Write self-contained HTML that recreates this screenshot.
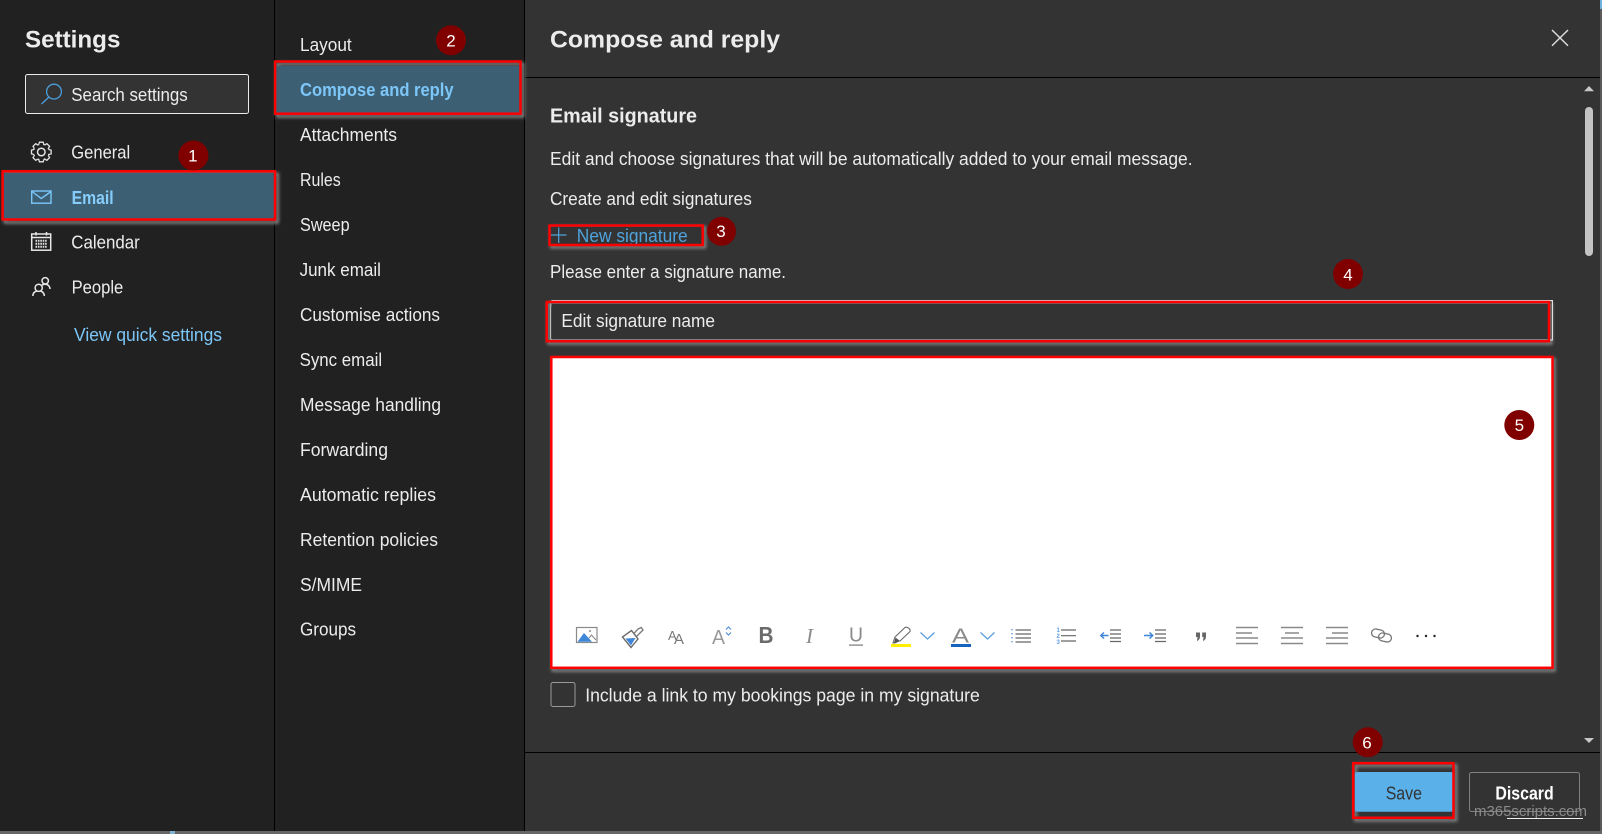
<!DOCTYPE html>
<html lang="en">
<head>
<meta charset="utf-8">
<title>Settings - Compose and reply</title>
<style>
html,body{margin:0;padding:0;background:#333;width:1602px;height:834px;overflow:hidden}
svg{display:block}
text{font-family:"Liberation Sans",sans-serif;font-size:18px;fill:#ececec}
.b{font-weight:bold}
.n{font-size:17px;fill:#fff;text-anchor:middle}
.red{fill:none;stroke:#f00;stroke-width:2.5}
.sh{fill:none;stroke:#888;stroke-width:3;filter:url(#s)}
.bl{fill:none;stroke:#3f86d8;stroke-width:1.3}
.g{stroke:#8a8a8a;stroke-width:1.6}
.d{stroke:#666;stroke-width:1.2}
</style>
</head>
<body>
<svg width="1602" height="834" viewBox="0 0 1602 834" xmlns="http://www.w3.org/2000/svg">
<defs><filter id="s" x="-10%" y="-30%" width="120%" height="160%"><feGaussianBlur stdDeviation="1.6"/></filter></defs>

<!-- panels -->
<rect width="1602" height="834" fill="#333"/>
<rect x="0" y="0" width="274" height="834" fill="#212121"/>
<rect x="275" y="0" width="249" height="834" fill="#212121"/>
<rect x="274" y="0" width="1" height="834" fill="#000"/>
<rect x="524" y="0" width="1" height="834" fill="#000"/>
<rect x="525" y="77" width="1075" height="1" fill="#000"/>
<rect x="525" y="752" width="1075" height="1" fill="#000"/>
<rect x="1600" y="0" width="2" height="834" fill="#5a5a5a"/>
<rect x="1600" y="0" width="2" height="9" fill="#6fb0dc"/>
<rect x="0" y="831" width="1602" height="3" fill="#666"/>
<rect x="170" y="831" width="5" height="3" fill="#7fb2d0"/>

<!-- left nav -->
<text class="b" x="25" y="47.6" style="font-size:24px" textLength="95.4" lengthAdjust="spacingAndGlyphs">Settings</text>
<rect x="25.5" y="74.5" width="223" height="39" rx="2" fill="#333" stroke="#ececec" stroke-width="1"/>
<g fill="none" stroke="#4a9fdc" stroke-width="1.3"><circle cx="54" cy="91.6" r="7.4"/><path d="M49 97 41.5 104"/></g>
<text x="71.3" y="101" textLength="116.4" lengthAdjust="spacingAndGlyphs">Search settings</text>

<g fill="none" stroke="#e4e4e4" stroke-width="1.3" transform="translate(41.3 152)">
<path d="M-2.54-7.37L-1.91-9.82H1.91L2.54-7.37A7.8 7.8 0 0 1 3.42-7.01"/>
<path transform="rotate(45)" d="M-2.54-7.37L-1.91-9.82H1.91L2.54-7.37A7.8 7.8 0 0 1 3.42-7.01"/>
<path transform="rotate(90)" d="M-2.54-7.37L-1.91-9.82H1.91L2.54-7.37A7.8 7.8 0 0 1 3.42-7.01"/>
<path transform="rotate(135)" d="M-2.54-7.37L-1.91-9.82H1.91L2.54-7.37A7.8 7.8 0 0 1 3.42-7.01"/>
<path transform="rotate(180)" d="M-2.54-7.37L-1.91-9.82H1.91L2.54-7.37A7.8 7.8 0 0 1 3.42-7.01"/>
<path transform="rotate(225)" d="M-2.54-7.37L-1.91-9.82H1.91L2.54-7.37A7.8 7.8 0 0 1 3.42-7.01"/>
<path transform="rotate(270)" d="M-2.54-7.37L-1.91-9.82H1.91L2.54-7.37A7.8 7.8 0 0 1 3.42-7.01"/>
<path transform="rotate(315)" d="M-2.54-7.37L-1.91-9.82H1.91L2.54-7.37A7.8 7.8 0 0 1 3.42-7.01"/>
<circle r="3.8" stroke-width="1.5"/>
</g>
<text x="71.3" y="158.6" textLength="58.9" lengthAdjust="spacingAndGlyphs">General</text>

<!-- email row -->
<rect x="2.6" y="171.3" width="272.4" height="48.2" fill="#3d5f73"/>
<rect class="sh" x="5" y="174" width="272.4" height="48.2"/>
<rect x="3" y="173" width="271" height="46" fill="#3d5f73"/>
<g fill="none" stroke="#7cc6f8" stroke-width="1.4"><rect x="31.7" y="191" width="19.3" height="12.2"/><path d="M32 191.5 41.3 198.5 51 191.5"/></g>
<text class="b" x="71.6" y="204.2" style="fill:#86cdfb" textLength="42" lengthAdjust="spacingAndGlyphs">Email</text>
<rect class="red" x="2.6" y="171.3" width="272.4" height="48.2"/>

<g fill="none" stroke="#e8e8e8" stroke-width="1.5"><rect x="31.7" y="234" width="19" height="16.2"/><path d="M31.7 237.5H50.7M36 232V235.5M46.5 232V235.5"/></g>
<g stroke="#e0e0e0" stroke-width="2" stroke-dasharray="1.6 .8"><path d="M35.5 240.8H47.5M35.5 243.8H47.5M35.5 246.8H47.5"/></g>
<text x="71.3" y="248.6" textLength="68.5" lengthAdjust="spacingAndGlyphs">Calendar</text>

<g fill="none" stroke="#e8e8e8" stroke-width="1.5"><circle cx="45.2" cy="280.8" r="3.2"/><circle cx="38.7" cy="287.8" r="3.6"/><path d="M32.8 296C33 293 35 291.5 36.6 291M40.8 291C42 291.5 44.2 293 44.4 296M42 285.5C42.5 284.5 43.2 284.3 45.2 284.3 48 284.3 50 286.5 50 289"/></g>
<text x="71.6" y="293.6" textLength="51.7" lengthAdjust="spacingAndGlyphs">People</text>
<text x="74" y="341.2" style="fill:#7cc6f8" textLength="148" lengthAdjust="spacingAndGlyphs">View quick settings</text>

<!-- second column -->
<text x="300" y="51" textLength="51.7" lengthAdjust="spacingAndGlyphs">Layout</text>
<rect class="sh" x="277.5" y="64" width="245.4" height="52.2"/>
<rect x="276" y="66" width="244" height="46.5" fill="#3d5f73"/>
<text class="b" x="300" y="96" style="fill:#7cc6f8" textLength="153.6" lengthAdjust="spacingAndGlyphs">Compose and reply</text>
<rect class="red" x="275.1" y="61.5" width="245.4" height="52.2"/>
<text x="300" y="141" textLength="97" lengthAdjust="spacingAndGlyphs">Attachments</text>
<text x="300" y="186" textLength="40.7" lengthAdjust="spacingAndGlyphs">Rules</text>
<text x="300" y="231" textLength="49.6" lengthAdjust="spacingAndGlyphs">Sweep</text>
<text x="299.6" y="276" textLength="81.3" lengthAdjust="spacingAndGlyphs">Junk email</text>
<text x="300" y="321" textLength="140" lengthAdjust="spacingAndGlyphs">Customise actions</text>
<text x="299.6" y="366" textLength="82.5" lengthAdjust="spacingAndGlyphs">Sync email</text>
<text x="300" y="411" textLength="141" lengthAdjust="spacingAndGlyphs">Message handling</text>
<text x="300" y="456" textLength="88" lengthAdjust="spacingAndGlyphs">Forwarding</text>
<text x="300" y="501" textLength="136" lengthAdjust="spacingAndGlyphs">Automatic replies</text>
<text x="300" y="546" textLength="138" lengthAdjust="spacingAndGlyphs">Retention policies</text>
<text x="300" y="591" textLength="62" lengthAdjust="spacingAndGlyphs">S/MIME</text>
<text x="300" y="635.6" textLength="56" lengthAdjust="spacingAndGlyphs">Groups</text>

<!-- header -->
<text class="b" x="550" y="47.7" style="font-size:24px" textLength="230" lengthAdjust="spacingAndGlyphs">Compose and reply</text>
<path d="M1552 30 1568 45.7M1568 30 1552 45.7" stroke="#e0e0e0" stroke-width="1.4"/>
<path d="M1584 91.3H1594L1589 86Z" fill="#c8c8c8"/>
<rect x="1585" y="107" width="8" height="149" rx="4" fill="#c4c4c4"/>
<path d="M1584 738H1594L1589 743Z" fill="#c8c8c8"/>

<!-- content -->
<text class="b" x="550" y="122.7" style="font-size:20px" textLength="147" lengthAdjust="spacingAndGlyphs">Email signature</text>
<text x="550" y="165" textLength="642.6" lengthAdjust="spacingAndGlyphs">Edit and choose signatures that will be automatically added to your email message.</text>
<text x="550" y="205" textLength="201.8" lengthAdjust="spacingAndGlyphs">Create and edit signatures</text>

<rect class="sh" x="551.5" y="227.5" width="153.2" height="19.5"/>
<rect x="550.8" y="226.8" width="151" height="17" fill="#333"/>
<path d="M551 235H566.5M558.7 227.5V243" stroke="#4fa3dc" stroke-width="1.2"/>
<text x="576.8" y="242" style="fill:#4fa3dc" textLength="110.9" lengthAdjust="spacingAndGlyphs">New signature</text>
<rect class="red" x="549.5" y="225.5" width="153.2" height="19.5"/>

<text x="550" y="278" textLength="236" lengthAdjust="spacingAndGlyphs">Please enter a signature name.</text>

<!-- name input -->
<rect x="550.5" y="300.5" width="1002" height="39.5" rx="2" fill="#333" stroke="#e0e0e0" stroke-width="1"/>
<rect class="sh" x="548.7" y="304" width="1002.3" height="39.2"/>
<rect x="552" y="304" width="996" height="35" fill="#333"/>
<text x="561.4" y="327" textLength="153.6" lengthAdjust="spacingAndGlyphs">Edit signature name</text>
<rect class="red" x="546.7" y="302" width="1002.3" height="39.2"/>
<path d="M1550 300.5H1552.5V340H1550" fill="none" stroke="#e0e0e0" stroke-width="1"/>

<!-- editor -->
<rect class="sh" x="553" y="359.5" width="1001.2" height="310.8"/>
<rect x="551.3" y="357" width="1001.2" height="310.8" fill="#fff"/>
<rect class="red" x="551.3" y="357" width="1001.2" height="310.8"/>

<!-- toolbar -->
<rect x="576.5" y="627.5" width="20.5" height="15" fill="#fff" stroke="#8a8a8a" stroke-width="1.2"/>
<path d="M577.5 641.8 584 633 592 641.8Z" fill="#3f86d8"/>
<path d="M589 638 591.5 635 596 640" fill="none" stroke="#888"/>
<circle cx="590" cy="631" r="1" fill="#888"/>

<path d="M622.5 637 631.5 630.5 638 639 631 647.5Z" fill="#fff" stroke="#6b6b6b" stroke-width="1.4"/>
<path d="M625.5 638.5 635.5 638 631 645.5Z" fill="#3f86d8"/>
<path d="M634 633.5 636.5 636.5 643 630 641.2 627.5 638 629Z" fill="#fff" stroke="#777" stroke-width="1.3"/>

<text x="668" y="640" style="font-size:13px;fill:#777">A</text>
<text x="674" y="644" style="font-size:15px;fill:#777">A</text>

<text x="712" y="644" style="font-size:20px;fill:#999" textLength="13" lengthAdjust="spacingAndGlyphs">A</text>
<path d="M726 629.5 728.5 627 731 629.5M726 632.5 728.5 635 731 632.5" fill="none" stroke="#3f86d8" stroke-width="1"/>

<text class="b" x="758.5" y="643" style="font-size:23px;fill:#6b6b6b" textLength="15" lengthAdjust="spacingAndGlyphs">B</text>
<text x="806" y="643" style="font-family:'Liberation Serif',serif;font-style:italic;font-size:21px;fill:#8c8c8c">I</text>
<text x="849" y="641.5" style="font-size:20px;fill:#8a8a8a" textLength="14" lengthAdjust="spacingAndGlyphs">U</text>
<rect x="849" y="644.5" width="14" height="1.2" fill="#777"/>

<path d="M897 641 895 643 893 643 895 637 905 627.5C907 626.5 911 629 910 631.5L900 641Z" fill="#fff" stroke="#6b6b6b" stroke-width="1.1"/>
<path d="M894 643 895.5 637.5 900 641 896 643Z" fill="#555"/>
<rect x="891" y="644" width="20" height="3" fill="#ffee00"/>
<path class="bl" style="stroke:#5a9ee0" d="M920.5 632.5 927.5 639 934.5 632.5"/>

<text x="952" y="642.5" style="font-size:20px;fill:#8a8a8a" textLength="17" lengthAdjust="spacingAndGlyphs">A</text>
<rect x="951" y="644" width="20" height="3" fill="#1565c0"/>
<path class="bl" style="stroke:#5a9ee0" d="M980.5 632.5 987.5 639 994.5 632.5"/>

<path class="d" d="M1015.5 630H1031M1015.5 634H1031M1015.5 638H1031M1015.5 642H1031"/>
<path d="M1012 629V643" stroke="#3f86d8" stroke-width="1.2" stroke-dasharray="1.4 2.6"/>

<path class="d" d="M1061 630H1076M1061 635.7H1076M1061 641H1076"/>
<text x="1056.5" y="632" style="font-size:6px;font-weight:bold;fill:#5a9ee0">1</text>
<text x="1056.5" y="638" style="font-size:6px;font-weight:bold;fill:#5a9ee0">2</text>
<text x="1056.5" y="644" style="font-size:6px;font-weight:bold;fill:#5a9ee0">3</text>

<path class="d" d="M1110 630H1121M1110 634H1121M1110 638H1121M1110 641.5H1121"/>
<path class="bl" style="stroke-width:1.5" d="M1108.5 635.5H1101M1104 632.5 1100.8 635.5 1104 638.5"/>

<path class="d" d="M1155 630H1166M1155 634H1166M1155 638H1166M1155 641.5H1166"/>
<path class="bl" style="stroke-width:1.5" d="M1144 635.5H1152.5M1149.5 632.5 1152.7 635.5 1149.5 638.5"/>

<path d="M1196 632.5H1200L1200 636.5C1200 639 1198.5 640.5 1197 641L1197.5 637H1196ZM1202.2 632.5H1206L1206 636.5C1206 639 1204.5 640.5 1203 641L1203.5 637H1202.2Z" fill="#666"/>

<path class="g" d="M1236 627.5H1258M1236 633H1252M1236 638H1258M1236 643.5H1258"/>
<path class="g" d="M1281 627.5H1303M1285 633H1299M1281 638H1303M1281 643.5H1303"/>
<path class="g" d="M1326 627.5H1348M1332 633H1348M1326 638H1348M1326 643.5H1348"/>

<g fill="none" stroke="#777" stroke-width="1.3">
<rect x="1371.5" y="629.5" width="13" height="8" rx="4" transform="rotate(12 1378 633.5)"/>
<rect x="1378.5" y="633.5" width="13" height="8" rx="4" transform="rotate(12 1385 637.5)"/>
</g>
<g fill="#222"><circle cx="1417.5" cy="636" r="1.2"/><circle cx="1426" cy="636" r="1.2"/><circle cx="1434.5" cy="636" r="1.2"/></g>

<!-- checkbox -->
<rect x="551" y="682.5" width="24" height="24" rx="2" fill="#333" stroke="#9a9a9a" stroke-width="1"/>
<text x="585.2" y="701.7" textLength="394.6" lengthAdjust="spacingAndGlyphs">Include a link to my bookings page in my signature</text>

<!-- footer -->
<rect class="sh" x="1355.5" y="765.5" width="100.3" height="54.6"/>
<rect x="1355" y="772" width="98" height="39.7" rx="2" fill="#5ab0e8"/>
<text x="1385.7" y="799.7" style="fill:#333" textLength="36.3" lengthAdjust="spacingAndGlyphs">Save</text>
<rect class="red" x="1353.2" y="763.2" width="100.3" height="54.6"/>

<rect x="1469.5" y="772.5" width="110" height="39" rx="2" fill="#333" stroke="#808080" stroke-width="1"/>
<text class="b" x="1495.4" y="799.7" style="fill:#fff" textLength="58.3" lengthAdjust="spacingAndGlyphs">Discard</text>
<text x="1474" y="816" style="font-size:15px;fill:#8a8a8a" textLength="113" lengthAdjust="spacing">m365scripts.com</text>
<rect x="1507" y="818" width="76" height="1" fill="#f0f0f0"/>

<!-- number badges -->
<g fill="#800000">
<circle cx="193.4" cy="155.5" r="15"/>
<circle cx="451" cy="40.3" r="15"/>
<circle cx="721.5" cy="231.3" r="14.5"/>
<circle cx="1348" cy="274" r="15"/>
<circle cx="1519.3" cy="425" r="15"/>
<circle cx="1367.7" cy="742.3" r="15"/>
</g>
<text class="n" x="192.8" y="161.5">1</text>
<text class="n" x="451" y="46.5">2</text>
<text class="n" x="721" y="237">3</text>
<text class="n" x="1348" y="280.3">4</text>
<text class="n" x="1519.3" y="431">5</text>
<text class="n" x="1367" y="748.3">6</text>
</svg>
</body>
</html>
